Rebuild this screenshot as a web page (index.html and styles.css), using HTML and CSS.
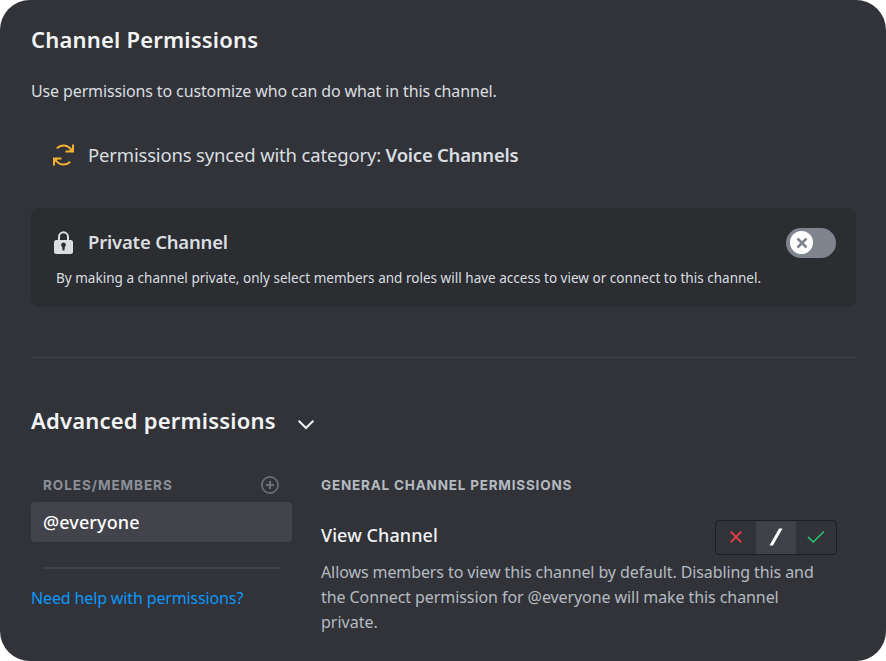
FILE: index.html
```
<!DOCTYPE html>
<html lang="en"><head><meta charset="utf-8"><title>Channel Permissions</title><link rel="stylesheet" href="styles.css"></head>
<body><main class="panel">
<h1 class="title"><span>Channel Permissions</span></h1>
<p class="intro"><span>Use permissions to customize who can do what in this channel.</span></p>
<div class="sync"><svg width="21" height="22" viewBox="0 0 21 22" fill="none" stroke="#f0b132" stroke-width="2"><path d="M3.800 4.300C8 .2 14.500.2 18.700 6.200M20 .5v6.900h-7.500M17.200 17.700C13 21.800 6.500 21.800 2.300 15.800M1 21.500v-6.900h7.500"/><path d="M20 3v4.400h-4.500zM1 19v-4.400h4.500z" fill="#f0b132" stroke="none"/></svg><span class="sync-text">Permissions synced with category: <b>Voice Channels</b></span></div>
<section class="card"><div class="card-head"><svg width="19" height="24" viewBox="0 0 19 24"><path d="M5 10V5.800a4.500 4.500 0 0 1 9 0V10" fill="none" stroke="#dbdee1" stroke-width="2"/><path fill="#dbdee1" fill-rule="evenodd" d="M2.500 9h14A2.500 2.500 0 0 1 19 11.500v9a2.500 2.500 0 0 1-2.500 2.500h-14A2.500 2.500 0 0 1 0 20.500v-9A2.500 2.500 0 0 1 2.500 9zM9.500 11.500a2.400 2.400 0 0 0-1.300 4.400L8.600 19.500h1.800l.4-3.600A2.400 2.400 0 0 0 9.500 11.500z"/></svg><h2 class="card-title">Private Channel</h2><span class="toggle"><span class="knob"><svg width="12" height="12" viewBox="0 0 12 12"><path d="M1.500 1.500l9 9M10.500 1.500l-9 9" stroke="#80848e" stroke-width="2.600"/></svg></span></span></div>
<p class="card-text"><span>By making a channel private, only select members and roles will have access to view or connect to this channel.</span></p></section>
<hr class="rule">
<div class="advanced"><h2 class="adv-title">Advanced permissions</h2><svg class="chevron" width="16" height="10" viewBox="0 0 16 10"><path d="M1.200 1.200L8 8l6.800-6.800" fill="none" stroke="#f2f3f5" stroke-width="2" stroke-linecap="round"/></svg></div>
<div class="columns"><aside class="side"><div class="side-head"><span class="label">ROLES/MEMBERS</span><svg width="18" height="18" viewBox="0 0 18 18" fill="none" stroke="#6d7078"><circle cx="9" cy="9" r="8.100" stroke-width="1.700"/><path d="M9 5v8M5 9h8" stroke-width="2"/></svg></div><div class="role"><span>@everyone</span></div><hr class="side-rule"><a class="help"><span>Need help with permissions?</span></a></aside>
<section class="perms"><h3 class="group">GENERAL CHANNEL PERMISSIONS</h3><div class="perm-head"><h4 class="perm-title">View Channel</h4><div class="options"><span class="opt"><svg width="12" height="12" viewBox="0 0 12 12"><path d="M.7.7l10.600 10.600M11.300.7L.7 11.300" stroke="#ed4245" stroke-width="1.700"/></svg></span><span class="opt active"><svg width="14" height="18" viewBox="0 0 14 18"><path fill="#fff" d="M.5 17.500L10 .5h3.500l-9.500 17z"/></svg></span><span class="opt"><svg width="18" height="14" viewBox="0 0 18 14"><path d="M1 7l5.300 5L17 1.500" fill="none" stroke="#2dc770" stroke-width="1.600"/></svg></span></div></div>
<p class="desc"><span class="d1">Allows members to view this channel by default. Disabling this and</span><br><span class="d2">the Connect permission for @everyone will make this channel</span><br>private.</p></section></div>
</main></body></html>
```
FILE: styles.css
```
* { box-sizing: border-box; }
body { margin: 0; background: #fff; font-family: "Noto Sans", sans-serif; color: #dbdee1; }
h1, h2, h3, h4, p { margin: 0; white-space: nowrap; }
svg { display: block; flex: none; }
.panel { width: 886px; height: 661px; padding: 23px 30px 0 31px; background: #313338; border-radius: 30px; overflow: hidden; }
.title { font-size: 22px; line-height: 32px; font-weight: 600; letter-spacing: .2px; color: #f2f3f5; }
.intro { margin-top: 24px; font-size: 16px; line-height: 24px; letter-spacing: -.13px; }
.sync { display: flex; align-items: center; height: 30px; margin-top: 37px; padding-left: 22px; gap: 14px; font-size: 18.500px; letter-spacing: -.17px; white-space: nowrap; }
.sync-text { padding-bottom: 2px; }
.sync b { font-weight: 600; letter-spacing: -.24px; }
.card { height: 99px; margin-top: 38px; padding: 20px 20px 0 23px; background: #2b2d31; border-radius: 8px; }
.card-head { display: flex; align-items: center; height: 30px; gap: 15px; }
.card-title { padding-bottom: 4px; font-size: 18.500px; font-weight: 600; letter-spacing: -.2px; }
.toggle { width: 50px; height: 30px; margin-left: auto; padding: 3px 4px; border-radius: 15px; background: #80848e; }
.knob { display: grid; place-items: center; width: 23px; height: 23px; border-radius: 50%; background: #fff; }
.card-text { padding-left: 2px; margin-top: 10px; font-size: 13.500px; line-height: 20px; letter-spacing: .02px; }
.rule { height: 1px; margin: 50px 0 0; border: 0; background: #3f4147; }
.advanced { display: flex; align-items: center; height: 32px; margin-top: 46px; gap: 22px; }
.adv-title { font-size: 22px; font-weight: 600; letter-spacing: .2px; color: #f2f3f5; }
.chevron { margin-top: 9px; }
.columns { display: grid; grid-template-columns: 261px 1fr; gap: 29px; margin-top: 39px; }
.side-head { display: flex; align-items: center; justify-content: space-between; height: 20px; padding: 0 13px 0 12px; }
.label, .group { font-family: Inter, sans-serif; font-size: 13.500px; line-height: 20px; font-weight: 700; }
.label { letter-spacing: .95px; color: #8b8f97; }
.role { height: 40px; margin-top: 7px; padding-left: 12px; line-height: 40px; font-size: 18px; font-weight: 500; letter-spacing: .1px; color: #fff; background: #43444b; border-radius: 4px; }
.side-rule { height: 2px; margin: 25px 12px 0; border: 0; background: #3f4147; }
.help { display: block; margin-top: 17px; font-size: 16px; line-height: 24px; letter-spacing: -.14px; color: #0c98fb; white-space: nowrap; }
.group { letter-spacing: .8px; color: #b5bac1; }
.perm-head { display: flex; height: 35px; margin-top: 25px; padding-right: 19px; justify-content: space-between; }
.perm-title { font-size: 18px; line-height: 30px; font-weight: 500; letter-spacing: .08px; color: #f2f3f5; }
.options { display: grid; grid-template-columns: repeat(3, 40px); width: 122px; height: 35px; border: 1px solid #1e1f22; border-radius: 4px; overflow: hidden; }
.opt { display: grid; place-items: center; padding-bottom: 1px; }
.active { background: #404249; }
.desc { margin-top: 5px; font-size: 16px; line-height: 25px; color: #b5bac1; }
.d1 { letter-spacing: -.1px; }
.d2 { letter-spacing: -.08px; }
```
